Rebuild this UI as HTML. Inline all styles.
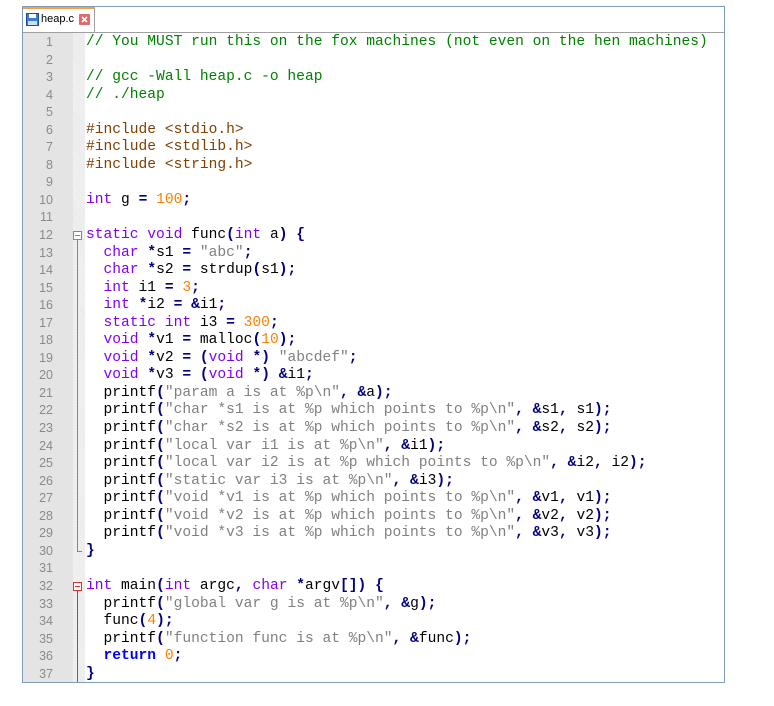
<!DOCTYPE html>
<html><head><meta charset="utf-8"><style>
body{margin:0;width:774px;height:706px;background:#fff;position:relative;overflow:hidden;font-family:"Liberation Mono","Courier New",monospace}
.frame{position:absolute;left:22px;top:6px;width:701px;height:675px;border:1px solid #7f9db9;background:#fff}
.tabbar{position:absolute;left:0;top:0;width:701px;height:25px;background:#fff;border-bottom:1px solid #a0a0a0}
.tab{position:absolute;left:0;top:0;width:72px;height:25px;background:#fff;border-right:1px solid #a0a0a0;border-top:2px solid #f5a142;box-sizing:border-box;font:11px "Liberation Sans",sans-serif;color:#000}
.gut{position:absolute;left:0;top:26px;width:50px;height:649px;background:#e4e4e4}
.fold{position:absolute;left:50px;top:26px;width:12px;height:649px;background:repeating-linear-gradient(45deg,#f4f4f4 0 1px,#e8e8e8 1px 2px)}
.nums{position:absolute;left:22px;top:34px;width:31px;text-align:right;font-family:"Liberation Sans",sans-serif;font-size:12.5px;line-height:17.55px;color:#8a8a8a}
.code{position:absolute;left:86px;top:34px;font-size:14.6px;line-height:17.55px;white-space:pre;color:#000}
.c{color:#008000}.k{color:#8000ff}.b{color:#0000ff;font-weight:bold}.s{color:#808080}.n{color:#ff8000}.o{color:#000080;font-weight:bold}.p{color:#804000}
</style></head><body>
<div class="frame">
<div class="tabbar"><div class="tab"><svg style="position:absolute;left:3px;top:4px" width="13" height="13"><rect x="0.5" y="0.5" width="12" height="12" fill="#3a7bd5" stroke="#1c4f9a"/><rect x="3" y="1" width="7" height="4" fill="#fff"/><rect x="2" y="8" width="9" height="4" fill="#cfe0f5"/></svg><span style="position:absolute;left:18px;top:4px">heap.c</span><svg style="position:absolute;left:56px;top:5px" width="11" height="11"><rect x="0" y="0" width="11" height="11" fill="#e06a6a" rx="1"/><path d="M3 3L8 8M8 3L3 8" stroke="#fff" stroke-width="1.6"/></svg></div></div>
<div class="gut"></div><div class="fold"></div>
</div>
<div style="position:absolute;left:73px;top:231px;width:9px;height:9px;border:1px solid #888;box-sizing:border-box;background:#fff"><div style="position:absolute;left:1px;top:3px;width:5px;height:1px;background:#888"></div></div>
<div style="position:absolute;left:77px;top:240px;width:1px;height:311px;background:#888"></div>
<div style="position:absolute;left:77px;top:551px;width:5px;height:1px;background:#888"></div>
<div style="position:absolute;left:73px;top:582px;width:9px;height:9px;border:1px solid #e03030;box-sizing:border-box;background:#fff"><div style="position:absolute;left:1px;top:3px;width:5px;height:1px;background:#e03030"></div></div>
<div style="position:absolute;left:77px;top:591px;width:1px;height:91px;background:#e03030"></div>
<div class="nums">1<br>2<br>3<br>4<br>5<br>6<br>7<br>8<br>9<br>10<br>11<br>12<br>13<br>14<br>15<br>16<br>17<br>18<br>19<br>20<br>21<br>22<br>23<br>24<br>25<br>26<br>27<br>28<br>29<br>30<br>31<br>32<br>33<br>34<br>35<br>36<br>37</div>
<div class="code"><span class="c">// You MUST run this on the fox machines (not even on the hen machines)</span>

<span class="c">// gcc -Wall heap.c -o heap</span>
<span class="c">// ./heap</span>

<span class="p">#include &lt;stdio.h&gt;</span>
<span class="p">#include &lt;stdlib.h&gt;</span>
<span class="p">#include &lt;string.h&gt;</span>

<span class="k">int</span> g <span class="o">=</span> <span class="n">100</span><span class="o">;</span>

<span class="k">static void</span> func<span class="o">(</span><span class="k">int</span> a<span class="o">) {</span>
  <span class="k">char</span> <span class="o">*</span>s1 <span class="o">=</span> <span class="s">"abc"</span><span class="o">;</span>
  <span class="k">char</span> <span class="o">*</span>s2 <span class="o">=</span> strdup<span class="o">(</span>s1<span class="o">);</span>
  <span class="k">int</span> i1 <span class="o">=</span> <span class="n">3</span><span class="o">;</span>
  <span class="k">int</span> <span class="o">*</span>i2 <span class="o">= &amp;</span>i1<span class="o">;</span>
  <span class="k">static int</span> i3 <span class="o">=</span> <span class="n">300</span><span class="o">;</span>
  <span class="k">void</span> <span class="o">*</span>v1 <span class="o">=</span> malloc<span class="o">(</span><span class="n">10</span><span class="o">);</span>
  <span class="k">void</span> <span class="o">*</span>v2 <span class="o">= (</span><span class="k">void</span> <span class="o">*)</span> <span class="s">"abcdef"</span><span class="o">;</span>
  <span class="k">void</span> <span class="o">*</span>v3 <span class="o">= (</span><span class="k">void</span> <span class="o">*) &amp;</span>i1<span class="o">;</span>
  printf<span class="o">(</span><span class="s">"param a is at %p\n"</span><span class="o">, &amp;</span>a<span class="o">);</span>
  printf<span class="o">(</span><span class="s">"char *s1 is at %p which points to %p\n"</span><span class="o">, &amp;</span>s1<span class="o">,</span> s1<span class="o">);</span>
  printf<span class="o">(</span><span class="s">"char *s2 is at %p which points to %p\n"</span><span class="o">, &amp;</span>s2<span class="o">,</span> s2<span class="o">);</span>
  printf<span class="o">(</span><span class="s">"local var i1 is at %p\n"</span><span class="o">, &amp;</span>i1<span class="o">);</span>
  printf<span class="o">(</span><span class="s">"local var i2 is at %p which points to %p\n"</span><span class="o">, &amp;</span>i2<span class="o">,</span> i2<span class="o">);</span>
  printf<span class="o">(</span><span class="s">"static var i3 is at %p\n"</span><span class="o">, &amp;</span>i3<span class="o">);</span>
  printf<span class="o">(</span><span class="s">"void *v1 is at %p which points to %p\n"</span><span class="o">, &amp;</span>v1<span class="o">,</span> v1<span class="o">);</span>
  printf<span class="o">(</span><span class="s">"void *v2 is at %p which points to %p\n"</span><span class="o">, &amp;</span>v2<span class="o">,</span> v2<span class="o">);</span>
  printf<span class="o">(</span><span class="s">"void *v3 is at %p which points to %p\n"</span><span class="o">, &amp;</span>v3<span class="o">,</span> v3<span class="o">);</span>
<span class="o">}</span>

<span class="k">int</span> main<span class="o">(</span><span class="k">int</span> argc<span class="o">,</span> <span class="k">char</span> <span class="o">*</span>argv<span class="o">[]) {</span>
  printf<span class="o">(</span><span class="s">"global var g is at %p\n"</span><span class="o">, &amp;</span>g<span class="o">);</span>
  func<span class="o">(</span><span class="n">4</span><span class="o">);</span>
  printf<span class="o">(</span><span class="s">"function func is at %p\n"</span><span class="o">, &amp;</span>func<span class="o">);</span>
  <span class="b">return</span> <span class="n">0</span><span class="o">;</span>
<span class="o">}</span></div>
</body></html>
